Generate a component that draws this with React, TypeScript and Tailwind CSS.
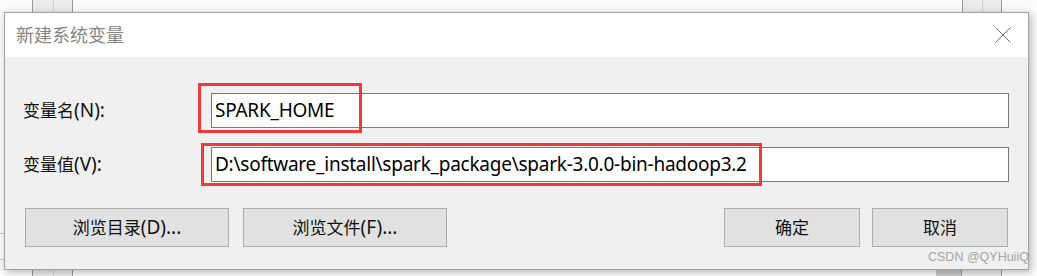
import React from "react";

const cjk = "font-['Noto_Sans','Noto_Sans_CJK_SC',sans-serif]";

// Latin glyphs in the dialog font run larger than the CJK ones
function L({ children }: { children: React.ReactNode }) {
  return <span className="text-[19px]">{children}</span>;
}

function CloseIcon() {
  return (
    <svg width="16" height="16" viewBox="0 0 16 16" className="block">
      <path d="M0.5 0.5 L15.5 15.5 M15.5 0.5 L0.5 15.5" stroke="#707070" strokeWidth="1" fill="none" />
    </svg>
  );
}

function Field({ label, hot, value }: { label: string; hot: string; value: string }) {
  return (
    <div className="flex items-center">
      <div className="w-[188px] text-[17px] text-[#111] leading-none">
        {label}
        <L>{hot}</L>
      </div>
      <div className="flex-1 h-[35px] bg-white border border-[#7a7a7a] flex items-center pl-[3px] text-[19px] tracking-[-0.25px] text-black leading-none whitespace-nowrap">
        {value}
      </div>
    </div>
  );
}

function Btn({ children, w }: { children: React.ReactNode; w: string }) {
  return (
    <button className={`${w} h-[39px] bg-[#e1e1e1] border border-[#adadad] text-[17px] text-[#111] leading-none flex items-center justify-center`}>
      {children}
    </button>
  );
}

export default function App() {
  return (
    <div className={`relative w-[1037px] h-[276px] bg-[#fbfbfb] overflow-hidden ${cjk}`}>
      {/* background windows peeking out */}
      <div className="absolute left-[32px] top-0 w-[41px] h-[14px] bg-[#ececec] border-x border-[#9a9a9a]">
        <div className="ml-[20px] w-px h-full bg-[#d2d2d2]" />
      </div>
      <div className="absolute left-[962px] top-0 w-[40px] h-[14px] bg-[#ececec] border-x border-[#9a9a9a]">
        <div className="ml-[19px] w-px h-full bg-[#d2d2d2]" />
      </div>
      <div className="absolute left-[32px] top-[268px] w-[41px] h-[8px] bg-[#ececec] border-x border-[#9a9a9a]">
        <div className="ml-[20px] w-px h-full bg-[#d2d2d2]" />
      </div>
      <div className="absolute left-[936px] top-[268px] w-[26px] h-[8px] bg-[#c9c9c9] border-r border-[#9a9a9a]" />
      <div className="absolute left-[962px] top-[268px] w-[40px] h-[8px] bg-[#ececec] border-r border-[#9a9a9a]" />
      <div className="absolute left-0 top-[233px] w-[4px] h-px bg-[#c8c8c8]" />
      <div className="absolute left-0 top-[259px] w-[4px] h-px bg-[#c8c8c8]" />

      {/* dialog */}
      <div className="relative ml-[4px] mt-[12px] w-[1025px] h-[258px] border border-[#a3a3a3] bg-[#f0f0f0] shadow-[2px_2px_8px_rgba(0,0,0,0.28)] flex flex-col">
        <div className="h-[44px] bg-white flex items-center justify-between pl-[11px] pr-[17px]">
          <span className="text-[18px] text-[#858585] leading-none">新建系统变量</span>
          <CloseIcon />
        </div>
        <div className="flex-1 flex flex-col pt-[36px] pl-[18px] pr-[19px]">
          <Field label="变量名" hot="(N):" value="SPARK_HOME" />
          <div className="h-[19px]" />
          <Field label="变量值" hot="(V):" value="D:\software_install\spark_package\spark-3.0.0-bin-hadoop3.2" />
          <div className="flex mt-[26px] ml-[2px] mr-[1px]">
            <Btn w="w-[204px]">
              浏览目录<L>(D)...</L>
            </Btn>
            <div className="w-[14px]" />
            <Btn w="w-[204px]">
              浏览文件<L>(F)...</L>
            </Btn>
            <div className="flex-1" />
            <Btn w="w-[136px]">确定</Btn>
            <div className="w-[12px]" />
            <Btn w="w-[136px]">取消</Btn>
          </div>
        </div>

        {/* red highlight boxes */}
        <div className="absolute left-[193px] top-[70px] w-[164px] h-[50px] border-[3px] border-[#f03a3a]" />
        <div className="absolute left-[196px] top-[130px] w-[561px] h-[43px] border-[3px] border-[#f03a3a]" />
      </div>

      {/* watermark */}
      <div className="absolute left-[928px] top-[251px] text-[12.5px] leading-none text-[#a6a6a6] font-['Liberation_Sans',sans-serif] whitespace-nowrap">
        CSDN @QYHuiiQ
      </div>
    </div>
  );
}
